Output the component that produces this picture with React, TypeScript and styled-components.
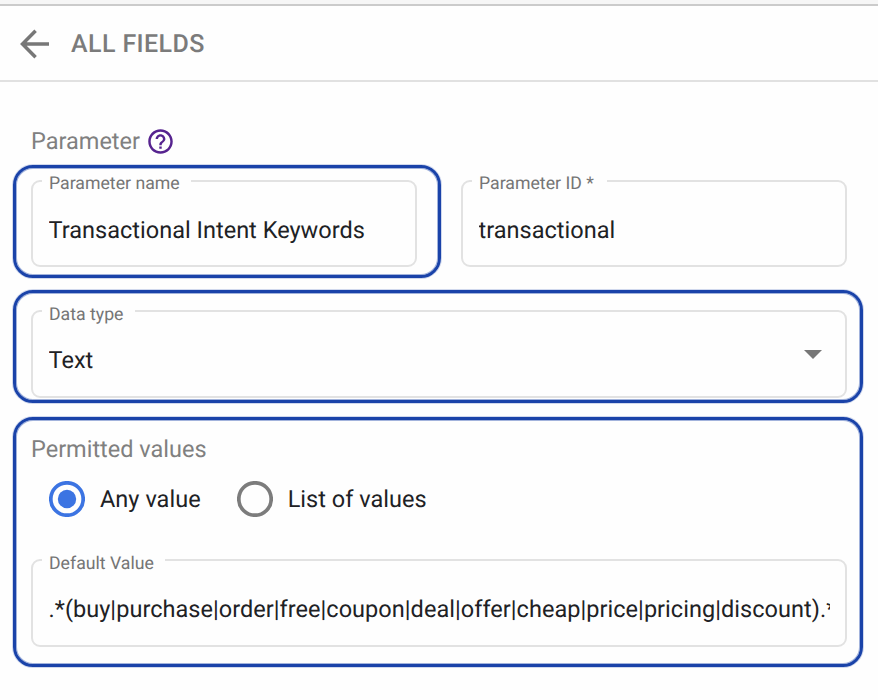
import React from "react";
import styled, { createGlobalStyle } from "styled-components";

const GlobalStyle = createGlobalStyle`
  *, *::before, *::after { box-sizing: border-box; }
  body {
    margin: 0;
    background: #fefefe;
    font-family: Roboto, "Liberation Sans", sans-serif;
    text-rendering: geometricPrecision;
  }
`;

const Page = styled.div`
  width: 878px;
  height: 700px;
  overflow: hidden;
  display: flex;
  flex-direction: column;
`;

const TopStrip = styled.div`
  height: 6px;
  flex: none;
  background: #f6f6f6;
  border-bottom: 2px solid #cbcbcb;
`;

const Header = styled.header`
  height: 76px;
  flex: none;
  display: flex;
  align-items: center;
  padding: 1px 0 0 20px;
  gap: 22px;
  border-bottom: 2px solid #e1e1e1;
`;

const Title = styled.h1`
  margin: 0;
  padding-top: 2px;
  font-size: 25px;
  font-weight: 500;
  line-height: 30px;
  letter-spacing: 0.4px;
  color: #7b7b7b;
`;

const Form = styled.main`
  display: flex;
  flex-direction: column;
  padding: 44px 15px 0 13px;
`;

const SectionTitle = styled.h2`
  margin: 0;
  display: flex;
  align-items: center;
  gap: 8px;
  height: 30px;
  font-size: 23.5px;
  font-weight: 400;
  line-height: 30px;
  color: #808080;
`;

const ParameterHeading = styled.div`
  padding-left: 18px;
  height: 39px;
`;

const FieldRow = styled.div`
  display: flex;
  gap: 20px;
`;

const Highlight = styled.section<{ $width?: string; $height: string; $top?: string; $pad: string }>`
  width: ${(p) => p.$width ?? "auto"};
  height: ${(p) => p.$height};
  margin-top: ${(p) => p.$top ?? "0"};
  padding: ${(p) => p.$pad};
  border: 3px solid #1a43a9;
  border-radius: 20px;
  box-shadow: 0 0 0 1px rgba(26, 67, 169, 0.2), inset 0 0 0 1px rgba(26, 67, 169, 0.4);
`;

const Field = styled.div<{ $width?: string; $height?: string; $top?: string }>`
  position: relative;
  width: ${(p) => p.$width ?? "auto"};
  height: ${(p) => p.$height ?? "87px"};
  margin-top: ${(p) => p.$top ?? "0"};
  padding: 12px 15px 0 15.5px;
  border: 2px solid #e2e2e2;
  border-radius: 9px;
  display: flex;
  align-items: center;
  justify-content: space-between;
`;

const FloatingLabel = styled.label<{ $top?: string; $end?: string }>`
  position: absolute;
  top: ${(p) => p.$top ?? "-9px"};
  left: 9px;
  padding: 0 ${(p) => p.$end ?? "11px"} 0 7px;
  background: #fefefe;
  font-size: 17.7px;
  line-height: 22px;
  white-space: nowrap;
  color: #757575;
`;

const Value = styled.div<{ $spacing?: string }>`
  flex: 1;
  overflow: hidden;
  white-space: nowrap;
  font-size: 23.5px;
  line-height: 30px;
  letter-spacing: ${(p) => p.$spacing ?? "0.02px"};
  color: #202124;
`;

const Caret = styled.svg`
  flex: none;
  margin: -12px 8px 0 0;
`;

const Choices = styled.div`
  display: flex;
  gap: 36px;
  margin-top: 17px;
  padding-left: 18px;
`;

const Choice = styled.label`
  display: flex;
  align-items: center;
  gap: 15px;
  font-size: 23.5px;
  line-height: 36px;
  letter-spacing: 0.03px;
  color: #202124;
`;

const Radio = ({ checked }: { checked?: boolean }) => (
  <svg width="36" height="36" viewBox="0 0 36 36">
    <circle cx="18" cy="18" r="16.2" fill="none" stroke={checked ? "#3c74e2" : "#7c7c7c"} strokeWidth="3.7" />
    {checked && <circle cx="18" cy="18" r="9.2" fill="#3c74e2" />}
  </svg>
);

const BackArrow = () => (
  <svg width="29" height="30" viewBox="0 0 29 30">
    <path d="M29 15H3M15.6 1.7L2.5 15l13.1 13.3" fill="none" stroke="#777" strokeWidth="3.5" />
  </svg>
);

const HelpIcon = () => (
  <svg width="25" height="25" viewBox="1.8 1.8 20.4 20.4">
    <path
      fill="#56238f"
      d="M11 18h2v-2h-2v2zm1-16C6.48 2 2 6.48 2 12s4.48 10 10 10 10-4.48 10-10S17.52 2 12 2zm0 18c-4.41 0-8-3.59-8-8s3.59-8 8-8 8 3.59 8 8-3.59 8-8 8zm0-14c-2.21 0-4 1.79-4 4h2c0-1.1.9-2 2-2s2 .9 2 2c0 2-3 1.75-3 5h2c0-2.25 3-2.5 3-5 0-2.21-1.79-4-4-4z"
    />
  </svg>
);

export default function App() {
  return (
    <>
      <GlobalStyle />
      <Page>
        <TopStrip />
        <Header>
          <BackArrow />
          <Title>ALL FIELDS</Title>
        </Header>
        <Form>
          <ParameterHeading>
            <SectionTitle>
              Parameter <HelpIcon />
            </SectionTitle>
          </ParameterHeading>
          <FieldRow>
            <Highlight $width="428px" $height="113px" $pad="12px 15px">
              <Field $width="386px">
                <FloatingLabel>Parameter name</FloatingLabel>
                <Value>Transactional Intent Keywords</Value>
              </Field>
            </Highlight>
            <Field $width="386px" $top="15px">
              <FloatingLabel $end="13px">Parameter ID *</FloatingLabel>
              <Value>transactional</Value>
            </Field>
          </FieldRow>
          <Highlight $height="113px" $top="12px" $pad="17px 13px 0 15px">
            <Field $height="88px">
              <FloatingLabel $top="-8px">Data type</FloatingLabel>
              <Value>Text</Value>
              <Caret width="18" height="9" viewBox="0 0 18 9">
                <path d="M0 0h18L9 9z" fill="#777" />
              </Caret>
            </Field>
          </Highlight>
          <Highlight $height="250px" $top="14px" $pad="14px 13px 0 15px">
            <SectionTitle>Permitted values</SectionTitle>
            <Choices>
              <Choice>
                <Radio checked />
                Any value
              </Choice>
              <Choice>
                <Radio />
                List of values
              </Choice>
            </Choices>
            <Field $height="88px" $top="42px">
              <FloatingLabel $top="-8px">Default Value</FloatingLabel>
              <Value $spacing="0.04px">
                .*(buy|purchase|order|free|coupon|deal|offer|cheap|price|pricing|discount).*
              </Value>
            </Field>
          </Highlight>
        </Form>
      </Page>
    </>
  );
}
